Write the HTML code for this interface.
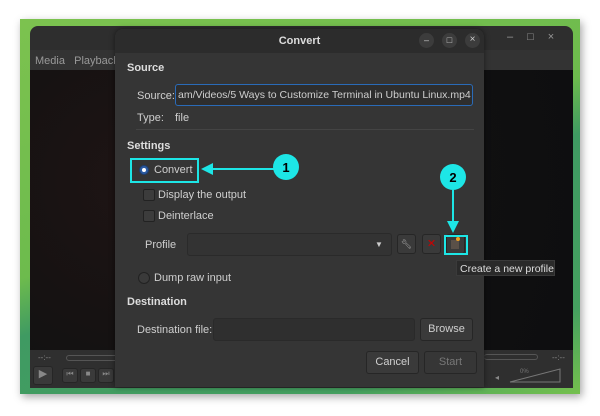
<!DOCTYPE html>
<html><head><style>
*{box-sizing:border-box;margin:0;padding:0}
body{width:600px;height:416px;background:#fff;position:relative;overflow:hidden;font-family:"Liberation Sans",sans-serif;font-size:11px;color:#cfcfcf}
.a{position:absolute}
.btn{position:absolute;background:#3a3a3a;border:1px solid #262626;border-radius:3px;color:#cfcfcf;text-align:center}
.cb{position:absolute;width:12px;height:12px;border:1px solid #222;background:#3c3c3c;border-radius:2px}
</style></head><body>
<div class="a" style="left:20px;top:19px;width:560px;height:375px;background:linear-gradient(160deg,#7cc24f 0%,#6dbb4d 45%,#3f9a62 55%,#45a060 85%,#74c04d 100%);box-shadow:2px 3px 8px rgba(0,0,0,.35)"></div>
<div class="a" style="left:30px;top:26px;width:543px;height:362px;background:#2e2e2e;border-radius:8px 8px 0 0"></div>
<div class="a" style="left:30px;top:50px;width:543px;height:20px;background:#333;color:#999;padding:5px 0 0 5px">Media&nbsp;&nbsp;&nbsp;Playback</div>
<div class="a" style="left:30px;top:70px;width:543px;height:280px;background:radial-gradient(circle at 20% 40%,#1e1414,#111 50%,#0e0e10)"></div>
<div class="a" style="left:507px;top:31px;color:#999;font-size:11px;letter-spacing:14px">–□×</div>
<div class="a" style="left:30px;top:350px;width:543px;height:38px;background:#2f2f2f"></div>
<div class="a" style="left:38px;top:353px;color:#888;font-size:8px">--:--</div>
<div class="a" style="left:66px;top:355px;width:60px;height:6px;border:1px solid #555;border-radius:3px"></div>
<div class="a" style="left:484px;top:354px;width:54px;height:6px;border:1px solid #555;border-radius:3px;border-left:none"></div>
<div class="a" style="left:552px;top:353px;color:#888;font-size:8px">--:--</div>
<div class="btn" style="left:33px;top:366px;width:20px;height:19px;color:#888">▶</div>
<div class="btn" style="left:62px;top:368px;width:16px;height:15px;font-size:8px;color:#888">⏮</div>
<div class="btn" style="left:80px;top:368px;width:16px;height:15px;font-size:8px;color:#888">■</div>
<div class="btn" style="left:98px;top:368px;width:16px;height:15px;font-size:8px;color:#888">⏭</div>
<svg class="a" style="left:495px;top:368px" width="66" height="16"><path d="M15 14 L65 14 L65 1 Z" fill="none" stroke="#777"/><text x="0" y="12" fill="#888" font-size="8">◂</text></svg>
<div class="a" style="left:520px;top:369px;color:#777;font-size:6px">0%</div>
<div class="a" style="left:115px;top:29px;width:369px;height:358px;background:#353535;border-radius:8px 8px 0 0;box-shadow:0 0 6px rgba(0,0,0,.5)"></div>
<div class="a" style="left:115px;top:29px;width:369px;height:24px;background:#2c2c2c;border-radius:8px 8px 0 0;text-align:center;font-weight:bold;color:#ddd;font-size:11px;padding-top:6px">Convert</div>
<div class="a" style="left:419px;top:33px;width:15px;height:15px;border-radius:50%;background:#3c3c3c;color:#ccc;font-size:9px;text-align:center;line-height:14px">–</div>
<div class="a" style="left:442px;top:33px;width:15px;height:15px;border-radius:50%;background:#3c3c3c;color:#ccc;font-size:9px;text-align:center;line-height:14px">□</div>
<div class="a" style="left:465px;top:33px;width:15px;height:15px;border-radius:50%;background:#3c3c3c;color:#ccc;font-size:10px;text-align:center;line-height:14px">×</div>
<div class="a" style="left:127px;top:62px;font-weight:bold;color:#ddd">Source</div>
<div class="a" style="left:137px;top:90px">Source:</div>
<div class="a" style="left:175px;top:84px;width:298px;height:22px;border:1px solid #2a6bb8;border-radius:3px;background:#2e2e2e;padding:4px 0 0 2px;white-space:nowrap;overflow:hidden;font-size:10.5px">am/Videos/5 Ways to Customize Terminal in Ubuntu Linux.mp4</div>
<div class="a" style="left:137px;top:112px">Type:</div>
<div class="a" style="left:175px;top:112px">file</div>
<div class="a" style="left:136px;top:129px;width:338px;height:1px;background:#444"></div>
<div class="a" style="left:127px;top:140px;font-weight:bold;color:#ddd">Settings</div>
<div class="a" style="left:139px;top:165px;width:10px;height:10px;border-radius:50%;background:#2b5aa0;border:1px solid #1d3e70"></div>
<div class="a" style="left:142px;top:168px;width:4px;height:4px;border-radius:50%;background:#fff"></div>
<div class="a" style="left:154px;top:164px">Convert</div>
<div class="a" style="left:130px;top:158px;width:69px;height:25px;border:2px solid #1de6e6"></div>
<svg class="a" style="left:200px;top:152px" width="100" height="32"><line x1="10" y1="17" x2="80" y2="17" stroke="#1de6e6" stroke-width="2"/><path d="M1 17 L13 11 L13 23 Z" fill="#1de6e6"/><circle cx="86" cy="15" r="13" fill="#1de6e6"/><text x="86" y="20" fill="#000" font-size="13" font-weight="bold" text-anchor="middle" font-family="Liberation Sans">1</text></svg>
<div class="cb" style="left:143px;top:189px"></div>
<div class="a" style="left:158px;top:189px">Display the output</div>
<div class="cb" style="left:143px;top:210px"></div>
<div class="a" style="left:158px;top:210px">Deinterlace</div>
<div class="a" style="left:145px;top:239px">Profile</div>
<div class="a" style="left:187px;top:233px;width:205px;height:23px;background:#333;border:1px solid #2a2a2a;border-radius:3px"></div>
<div class="a" style="left:375px;top:240px;color:#ccc;font-size:8px">▼</div>
<div class="btn" style="left:397px;top:234px;width:19px;height:20px;font-size:9px;line-height:18px;color:#aaa">🔧︎</div>
<div class="btn" style="left:422px;top:234px;width:19px;height:20px;font-size:11px;line-height:18px;color:#c00">✕</div>
<div class="btn" style="left:446px;top:234px;width:19px;height:20px"></div>
<div class="a" style="left:451px;top:240px;width:8px;height:9px;background:#5a5048"></div>
<div class="a" style="left:456px;top:237px;width:4px;height:4px;border-radius:50%;background:#f0a020"></div>
<div class="a" style="left:444px;top:235px;width:24px;height:20px;border:2px solid #1de6e6"></div>
<svg class="a" style="left:440px;top:163px" width="30" height="70"><circle cx="13" cy="14" r="13" fill="#1de6e6"/><text x="13" y="19" fill="#000" font-size="13" font-weight="bold" text-anchor="middle" font-family="Liberation Sans">2</text><line x1="13" y1="27" x2="13" y2="62" stroke="#1de6e6" stroke-width="2"/><path d="M7 58 L19 58 L13 70 Z" fill="#1de6e6"/></svg>
<div class="a" style="left:456px;top:260px;width:99px;height:16px;background:#2a2a2a;border:1px solid #3a3a3a;color:#ddd;padding:2px 0 0 3px;white-space:nowrap;font-size:10.5px">Create a new profile</div>
<div class="a" style="left:138px;top:272px;width:12px;height:12px;border-radius:50%;border:1px solid #222;background:#3a3a3a"></div>
<div class="a" style="left:154px;top:272px">Dump raw input</div>
<div class="a" style="left:127px;top:296px;font-weight:bold;color:#ddd">Destination</div>
<div class="a" style="left:137px;top:324px">Destination file:</div>
<div class="a" style="left:213px;top:318px;width:202px;height:23px;background:#2f2f2f;border:1px solid #2a2a2a;border-radius:3px"></div>
<div class="btn" style="left:420px;top:318px;width:53px;height:23px;line-height:21px">Browse</div>
<div class="btn" style="left:366px;top:351px;width:53px;height:23px;line-height:21px">Cancel</div>
<div class="btn" style="left:424px;top:351px;width:53px;height:23px;line-height:21px;color:#777;background:#363636">Start</div>
</body></html>
